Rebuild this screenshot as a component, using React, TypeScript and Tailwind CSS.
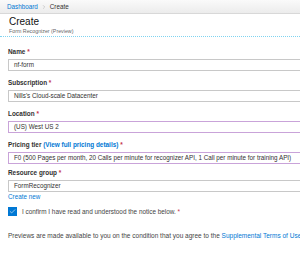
import { Check, ChevronRight } from "lucide-react";

type FieldProps = {
  label: React.ReactNode;
  value: string;
  focused?: boolean;
  className?: string;
};

function Field({ label, value, focused, className }: FieldProps) {
  return (
    <div className={className}>
      <div className="h-[8px] text-[6.4px] font-semibold leading-[8px] text-[#323130]">
        {label} <span className="text-[#c4314b]">*</span>
      </div>
      <div
        className={
          "mt-[3px] flex h-[12px] items-center whitespace-nowrap border px-[5px] text-[6.3px] text-[#323130] " +
          (focused ? "border-[#c9a3d9]" : "border-[#c8c8c8]")
        }
      >
        {value}
      </div>
    </div>
  );
}

export default function App() {
  return (
    <div
      className="h-[259px] w-[300px] overflow-hidden bg-white"
      style={{ fontFamily: '"Liberation Sans", Arial, sans-serif' }}
    >
      <div className="flex h-[14px] items-center gap-[3px] border-b border-[#d8d8d8] bg-gradient-to-b from-[#fafafa] to-[#ececec] pl-[7px] text-[6.3px]">
        <span className="text-[#0078d4]">Dashboard</span>
        <ChevronRight className="h-[6px] w-[6px] text-[#aaa]" strokeWidth={2} />
        <span className="text-[#323130]">Create</span>
      </div>

      <div className="px-[9px] pt-[2px]">
        <div className="text-[10px] leading-[12px] text-[#111]">Create</div>
        <div className="text-[5.3px] leading-[6px] text-[#666]">Form Recognizer (Preview)</div>
      </div>
      <div className="mt-[2px] border-t border-dotted border-[#7fd3f0]" />

      <div className="w-[320px] pl-[8px]">
        <Field className="mt-[11px]" label="Name" value="nf-form" />
        <Field className="mt-[8px]" label="Subscription" value="Nills's Cloud-scale Datacenter" />
        <Field className="mt-[8px]" label="Location" value="(US) West US 2" focused />
        <Field
          className="mt-[8px]"
          label={
            <>
              Pricing tier <span className="text-[#0078d4]">(View full pricing details)</span>
            </>
          }
          value="F0 (500 Pages per month, 20 Calls per minute for recognizer API, 1 Call per minute for training API)"
          focused
        />
        <Field className="mt-[5px]" label="Resource group" value="FormRecognizer" />
        <div className="mt-[1px] h-[8px] text-[6.3px] leading-[8px] text-[#0078d4]">Create new</div>

        <div className="mt-[6px] flex h-[9px] items-center gap-[5px]">
          <div className="flex h-[9px] w-[9px] items-center justify-center bg-[#0078d4]">
            <Check className="h-[7px] w-[7px] text-white" strokeWidth={2} />
          </div>
          <span className="text-[6.4px] text-[#444]">
            I confirm I have read and understood the notice below. <span className="text-[#c4314b]">*</span>
          </span>
        </div>

        <div className="mt-[16px] h-[8px] whitespace-nowrap text-[6.5px] leading-[8px] text-[#444]">
          Previews are made available to you on the condition that you agree to the{" "}
          <span className="text-[#0078d4]">Supplemental Terms of Use</span>
        </div>
      </div>
    </div>
  );
}
